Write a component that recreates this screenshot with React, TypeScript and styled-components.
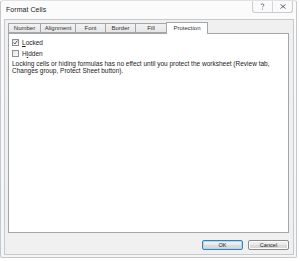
import React from "react";
import styled, { createGlobalStyle } from "styled-components";

const Global = createGlobalStyle`
  html, body { margin: 0; padding: 0; background: #ffffff; }
  body { width: 300px; height: 261px; overflow: hidden; font-family: "Liberation Sans", Arial, sans-serif; }
`;

const Window = styled.div`
  box-sizing: border-box;
  width: 297px;
  height: 258px;
  margin: 0;
  border: 1px solid #c4c8cd;
  border-top-color: #dfe2e6;
  border-radius: 3px 3px 2px 2px;
  background: linear-gradient(180deg, #fbfbfc 0%, #f4f5f7 100%);
  display: flex;
  flex-direction: column;
  padding: 0 2px 2px 3px;
`;

const TitleBar = styled.div`
  height: 18px;
  display: flex;
  align-items: flex-start;
`;

const Title = styled.div`
  font-size: 7px;
  color: #1e1e1e;
  padding: 5px 0 0 2px;
  letter-spacing: 0.05px;
`;

const Caption = styled.div`
  margin-left: auto;
  margin-right: 1px;
  display: flex;
  height: 11px;
  border: 1px solid #c9ccd1;
  border-top: none;
  border-radius: 0 0 3px 3px;
  background: #fafafa;
`;

const CaptionButton = styled.div<{ $w: number }>`
  width: ${(p) => p.$w}px;
  display: flex;
  align-items: center;
  justify-content: center;
  & + & { border-left: 1px solid #d3d6da; }
  svg { display: block; }
`;

const Client = styled.div`
  flex: 1;
  box-sizing: border-box;
  border: 1px solid #c7c9cc;
  background: #f0f0f0;
  display: flex;
  flex-direction: column;
  padding: 1px 4px 0 3px;
`;

const TabStrip = styled.div`
  display: flex;
  align-items: flex-end;
  height: 12px;
  position: relative;
  z-index: 1;
`;

const Tab = styled.div<{ $w: number; $active?: boolean }>`
  box-sizing: border-box;
  width: ${(p) => p.$w}px;
  height: ${(p) => (p.$active ? 12 : 10)}px;
  margin-bottom: ${(p) => (p.$active ? -1 : 0)}px;
  border: 1px solid #a3a6ab;
  border-bottom: ${(p) => (p.$active ? "none" : "1px solid #a3a6ab")};
  background: ${(p) =>
    p.$active ? "#ffffff" : "linear-gradient(180deg, #f2f2f2 0%, #e6e6e6 100%)"};
  & + & { margin-left: -1px; }
  font-size: 6px;
  color: #333333;
  display: flex;
  align-items: center;
  justify-content: center;
  padding-bottom: ${(p) => (p.$active ? 1 : 0)}px;
`;

const Pane = styled.div`
  height: 200px;
  box-sizing: border-box;
  background: #ffffff;
  border: 1px solid #a3a6ab;
  padding: 4px 4px 0 3px;
  display: flex;
  flex-direction: column;
`;

const CheckRow = styled.label`
  display: flex;
  align-items: center;
  gap: 3px;
  height: 8px;
  margin-bottom: 3px;
  font-size: 6.5px;
  color: #1a1a1a;
`;

const Box = styled.span`
  box-sizing: border-box;
  width: 7px;
  height: 7px;
  border: 1px solid #8f8f8f;
  background: linear-gradient(135deg, #e6e6e6 0%, #fbfbfb 100%);
  display: flex;
  align-items: center;
  justify-content: center;
`;

const Under = styled.span`
  text-decoration: underline;
  text-underline-offset: 1px;
  text-decoration-thickness: 0.5px;
`;

const Note = styled.p`
  margin: 0;
  font-size: 6.5px;
  line-height: 7px;
  color: #1a1a1a;
`;

const ButtonRow = styled.div`
  display: flex;
  justify-content: flex-end;
  gap: 5px;
  padding: 7px 0 0 0;
`;

const Button = styled.div<{ $default?: boolean }>`
  box-sizing: border-box;
  width: 41px;
  height: 10px;
  border: 1px solid ${(p) => (p.$default ? "#3c7fb1" : "#8a8a8a")};
  border-radius: 2px;
  background: linear-gradient(180deg, #f4f4f4 0%, #e8e8e8 50%, #dcdcdc 51%, #d6d6d6 100%);
  box-shadow: ${(p) => (p.$default ? "inset 0 0 0 1px #a8dcf6" : "inset 0 0 0 1px #fbfbfb")};
  font-size: 5.6px;
  color: #1e1e1e;
  display: flex;
  align-items: center;
  justify-content: center;
`;

const tabs = [
  { label: "Number", w: 33 },
  { label: "Alignment", w: 36 },
  { label: "Font", w: 31 },
  { label: "Border", w: 31 },
  { label: "Fill", w: 32 },
];

export default function App() {
  return (
    <>
      <Global />
      <Window>
        <TitleBar>
          <Title>Format Cells</Title>
          <Caption>
            <CaptionButton $w={19}>
              <svg width="5" height="7" viewBox="0 0 5 7">
                <path d="M1 2 C1 0.6 4 0.6 4 2 C4 3 2.5 3 2.5 4.3" fill="none" stroke="#555" strokeWidth="0.8" />
                <circle cx="2.5" cy="6" r="0.5" fill="#555" />
              </svg>
            </CaptionButton>
            <CaptionButton $w={19}>
              <svg width="6" height="5" viewBox="0 0 6 5">
                <path d="M0.5 0.5 L5.5 4.5 M5.5 0.5 L0.5 4.5" stroke="#555" strokeWidth="0.9" />
              </svg>
            </CaptionButton>
          </Caption>
        </TitleBar>
        <Client>
          <TabStrip>
            {tabs.map((t) => (
              <Tab key={t.label} $w={t.w}>
                {t.label}
              </Tab>
            ))}
            <Tab $w={42} $active>
              Protection
            </Tab>
          </TabStrip>
          <Pane>
            <CheckRow>
              <Box>
                <svg width="5" height="5" viewBox="0 0 5 5">
                  <path d="M0.6 2.6 L1.9 4 L4.4 0.6" fill="none" stroke="#2b4f80" strokeWidth="0.9" />
                </svg>
              </Box>
              <span>
                <Under>L</Under>ocked
              </span>
            </CheckRow>
            <CheckRow>
              <Box />
              <span>
                H<Under>i</Under>dden
              </span>
            </CheckRow>
            <Note>
              Locking cells or hiding formulas has no effect until you protect the worksheet (Review tab,
              <br />
              Changes group, Protect Sheet button).
            </Note>
          </Pane>
          <ButtonRow>
            <Button $default>OK</Button>
            <Button>Cancel</Button>
          </ButtonRow>
        </Client>
      </Window>
    </>
  );
}
